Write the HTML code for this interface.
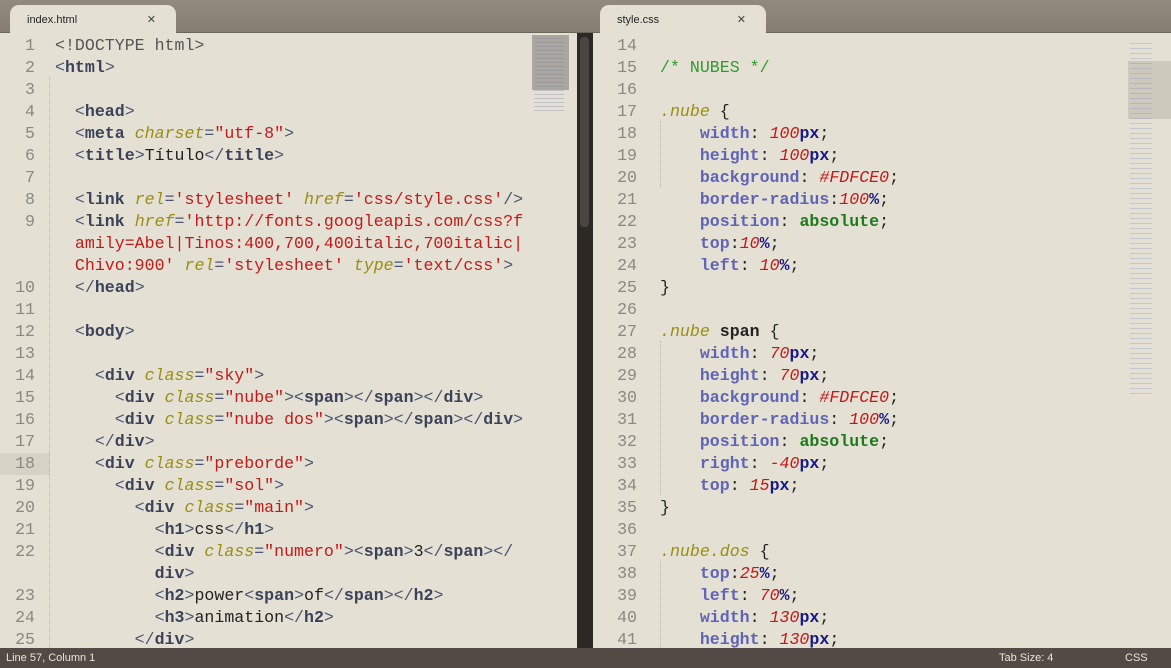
<!DOCTYPE html>
<html><head><meta charset="utf-8">
<style>
*{margin:0;padding:0;box-sizing:border-box}
body{width:1171px;height:668px;overflow:hidden;background:#e4e1d4;position:relative;font-family:"Liberation Mono",monospace}
.tabbar{position:absolute;left:0;top:0;width:1171px;height:33px;background:linear-gradient(#928a7e,#857d71);border-bottom:1px solid #6c655c}
.tab{position:absolute;top:5px;height:28px;background:#e4e1d4;border-radius:9px 9px 0 0;font-family:"Liberation Sans",sans-serif;font-size:11px;color:#222;padding:9px 0 0 17px}
.tab .x{position:absolute;right:20px;top:8px;font-size:11px;color:#444}
.pane{position:absolute;top:33px;height:615px;background:#e4e1d4;overflow:hidden}
.ln,.cd{position:absolute;white-space:pre;font-size:16.6px;line-height:22px;height:22px}
.ln{color:#8a8880;text-align:right;width:40px}
.b{color:#4b5573}.t{color:#3b4259;font-weight:bold}.a{color:#9a8d12;font-style:italic}.s{color:#c21a1a}.d{color:#555}
.p{color:#6064b6;font-weight:bold}.n{color:#c21818;font-style:italic}.u{color:#161a86;font-weight:bold}.g{color:#1d7a1d;font-weight:bold}.c{color:#2e9a2e}.k{color:#222}
.status{position:absolute;left:0;top:648px;width:1171px;height:20px;background:#524b45;color:#e8e4dc;font-family:"Liberation Sans",sans-serif;font-size:11px}
.guide{position:absolute;width:0;border-left:1px dotted #bdb9aa}
</style></head><body>
<div class="tabbar">
 <div class="tab" style="left:10px;width:166px">index.html<span class="x">✕</span></div>
 <div class="tab" style="left:600px;width:166px">style.css<span class="x">✕</span></div>
</div>

<div class="pane" style="left:0;width:577px">
 <div style="position:absolute;left:0;top:420px;width:50px;height:22px;background:#d6d3c6"></div>
 <div style="position:absolute;left:532px;top:2px;width:37px;height:55px;background:#aca79c"></div>
 <div style="position:absolute;left:534px;top:5px;width:30px;height:75px;background:repeating-linear-gradient(#7a7fa8 0 1px,transparent 1px 4px);opacity:.35"></div>
 <div class="guide" style="left:49px;top:44px;height:571px"></div>
</div>
<div style="position:absolute;left:577px;top:33px;width:16px;height:615px;background:#2b2825"></div>
<div style="position:absolute;left:580px;top:37px;width:9px;height:190px;background:#4b4641;border-radius:4px"></div>

<div class="pane" style="left:593px;width:578px">
 <div style="position:absolute;left:535px;top:28px;width:43px;height:58px;background:#cdc9bc"></div>
 <div style="position:absolute;left:537px;top:10px;width:22px;height:355px;background:repeating-linear-gradient(#8f93c8 0 1px,transparent 1px 5px);opacity:.35"></div>
 <div class="guide" style="left:67px;top:88px;height:66px"></div>
 <div class="guide" style="left:67px;top:308px;height:154px"></div>
 <div class="guide" style="left:67px;top:528px;height:87px"></div>
</div>

<!-- left code -->
<div class="ln" style="left:-5px;top:35px">1</div><div class="cd" style="left:55px;top:35px"><span class="d">&lt;!DOCTYPE html&gt;</span></div>
<div class="ln" style="left:-5px;top:57px">2</div><div class="cd" style="left:55px;top:57px"><span class="b">&lt;</span><span class="t">html</span><span class="b">&gt;</span></div>
<div class="ln" style="left:-5px;top:79px">3</div>
<div class="ln" style="left:-5px;top:101px">4</div><div class="cd" style="left:55px;top:101px">  <span class="b">&lt;</span><span class="t">head</span><span class="b">&gt;</span></div>
<div class="ln" style="left:-5px;top:123px">5</div><div class="cd" style="left:55px;top:123px">  <span class="b">&lt;</span><span class="t">meta</span> <span class="a">charset</span><span class="b">=</span><span class="s">"utf-8"</span><span class="b">&gt;</span></div>
<div class="ln" style="left:-5px;top:145px">6</div><div class="cd" style="left:55px;top:145px">  <span class="b">&lt;</span><span class="t">title</span><span class="b">&gt;</span><span class="k">Título</span><span class="b">&lt;/</span><span class="t">title</span><span class="b">&gt;</span></div>
<div class="ln" style="left:-5px;top:167px">7</div>
<div class="ln" style="left:-5px;top:189px">8</div><div class="cd" style="left:55px;top:189px">  <span class="b">&lt;</span><span class="t">link</span> <span class="a">rel</span><span class="b">=</span><span class="s">'stylesheet'</span> <span class="a">href</span><span class="b">=</span><span class="s">'css/style.css'</span><span class="b">/&gt;</span></div>
<div class="ln" style="left:-5px;top:211px">9</div><div class="cd" style="left:55px;top:211px">  <span class="b">&lt;</span><span class="t">link</span> <span class="a">href</span><span class="b">=</span><span class="s">'http://fonts.googleapis.com/css?f</span></div>
<div class="cd" style="left:55px;top:233px">  <span class="s">amily=Abel|Tinos:400,700,400italic,700italic|</span></div>
<div class="cd" style="left:55px;top:255px">  <span class="s">Chivo:900'</span> <span class="a">rel</span><span class="b">=</span><span class="s">'stylesheet'</span> <span class="a">type</span><span class="b">=</span><span class="s">'text/css'</span><span class="b">&gt;</span></div>
<div class="ln" style="left:-5px;top:277px">10</div><div class="cd" style="left:55px;top:277px">  <span class="b">&lt;/</span><span class="t">head</span><span class="b">&gt;</span></div>
<div class="ln" style="left:-5px;top:299px">11</div>
<div class="ln" style="left:-5px;top:321px">12</div><div class="cd" style="left:55px;top:321px">  <span class="b">&lt;</span><span class="t">body</span><span class="b">&gt;</span></div>
<div class="ln" style="left:-5px;top:343px">13</div>
<div class="ln" style="left:-5px;top:365px">14</div><div class="cd" style="left:55px;top:365px">    <span class="b">&lt;</span><span class="t">div</span> <span class="a">class</span><span class="b">=</span><span class="s">"sky"</span><span class="b">&gt;</span></div>
<div class="ln" style="left:-5px;top:387px">15</div><div class="cd" style="left:55px;top:387px">      <span class="b">&lt;</span><span class="t">div</span> <span class="a">class</span><span class="b">=</span><span class="s">"nube"</span><span class="b">&gt;&lt;</span><span class="t">span</span><span class="b">&gt;&lt;/</span><span class="t">span</span><span class="b">&gt;&lt;/</span><span class="t">div</span><span class="b">&gt;</span></div>
<div class="ln" style="left:-5px;top:409px">16</div><div class="cd" style="left:55px;top:409px">      <span class="b">&lt;</span><span class="t">div</span> <span class="a">class</span><span class="b">=</span><span class="s">"nube dos"</span><span class="b">&gt;&lt;</span><span class="t">span</span><span class="b">&gt;&lt;/</span><span class="t">span</span><span class="b">&gt;&lt;/</span><span class="t">div</span><span class="b">&gt;</span></div>
<div class="ln" style="left:-5px;top:431px">17</div><div class="cd" style="left:55px;top:431px">    <span class="b">&lt;/</span><span class="t">div</span><span class="b">&gt;</span></div>
<div class="ln" style="left:-5px;top:453px">18</div><div class="cd" style="left:55px;top:453px">    <span class="b">&lt;</span><span class="t">div</span> <span class="a">class</span><span class="b">=</span><span class="s">"preborde"</span><span class="b">&gt;</span></div>
<div class="ln" style="left:-5px;top:475px">19</div><div class="cd" style="left:55px;top:475px">      <span class="b">&lt;</span><span class="t">div</span> <span class="a">class</span><span class="b">=</span><span class="s">"sol"</span><span class="b">&gt;</span></div>
<div class="ln" style="left:-5px;top:497px">20</div><div class="cd" style="left:55px;top:497px">        <span class="b">&lt;</span><span class="t">div</span> <span class="a">class</span><span class="b">=</span><span class="s">"main"</span><span class="b">&gt;</span></div>
<div class="ln" style="left:-5px;top:519px">21</div><div class="cd" style="left:55px;top:519px">          <span class="b">&lt;</span><span class="t">h1</span><span class="b">&gt;</span><span class="k">css</span><span class="b">&lt;/</span><span class="t">h1</span><span class="b">&gt;</span></div>
<div class="ln" style="left:-5px;top:541px">22</div><div class="cd" style="left:55px;top:541px">          <span class="b">&lt;</span><span class="t">div</span> <span class="a">class</span><span class="b">=</span><span class="s">"numero"</span><span class="b">&gt;&lt;</span><span class="t">span</span><span class="b">&gt;</span><span class="k">3</span><span class="b">&lt;/</span><span class="t">span</span><span class="b">&gt;&lt;/</span></div>
<div class="cd" style="left:55px;top:563px">          <span class="t">div</span><span class="b">&gt;</span></div>
<div class="ln" style="left:-5px;top:585px">23</div><div class="cd" style="left:55px;top:585px">          <span class="b">&lt;</span><span class="t">h2</span><span class="b">&gt;</span><span class="k">power</span><span class="b">&lt;</span><span class="t">span</span><span class="b">&gt;</span><span class="k">of</span><span class="b">&lt;/</span><span class="t">span</span><span class="b">&gt;&lt;/</span><span class="t">h2</span><span class="b">&gt;</span></div>
<div class="ln" style="left:-5px;top:607px">24</div><div class="cd" style="left:55px;top:607px">          <span class="b">&lt;</span><span class="t">h3</span><span class="b">&gt;</span><span class="k">animation</span><span class="b">&lt;/</span><span class="t">h2</span><span class="b">&gt;</span></div>
<div class="ln" style="left:-5px;top:629px">25</div><div class="cd" style="left:55px;top:629px">        <span class="b">&lt;/</span><span class="t">div</span><span class="b">&gt;</span></div>

<!-- right code -->
<div class="ln" style="left:597px;top:35px">14</div>
<div class="ln" style="left:597px;top:57px">15</div><div class="cd" style="left:660px;top:57px"><span class="c">/* NUBES */</span></div>
<div class="ln" style="left:597px;top:79px">16</div>
<div class="ln" style="left:597px;top:101px">17</div><div class="cd" style="left:660px;top:101px"><span class="a">.nube</span> <span class="k">{</span></div>
<div class="ln" style="left:597px;top:123px">18</div><div class="cd" style="left:660px;top:123px">    <span class="p">width</span><span class="k">: </span><span class="n">100</span><span class="u">px</span><span class="k">;</span></div>
<div class="ln" style="left:597px;top:145px">19</div><div class="cd" style="left:660px;top:145px">    <span class="p">height</span><span class="k">: </span><span class="n">100</span><span class="u">px</span><span class="k">;</span></div>
<div class="ln" style="left:597px;top:167px">20</div><div class="cd" style="left:660px;top:167px">    <span class="p">background</span><span class="k">: </span><span class="n">#FDFCE0</span><span class="k">;</span></div>
<div class="ln" style="left:597px;top:189px">21</div><div class="cd" style="left:660px;top:189px">    <span class="p">border-radius</span><span class="k">:</span><span class="n">100</span><span class="u">%</span><span class="k">;</span></div>
<div class="ln" style="left:597px;top:211px">22</div><div class="cd" style="left:660px;top:211px">    <span class="p">position</span><span class="k">: </span><span class="g">absolute</span><span class="k">;</span></div>
<div class="ln" style="left:597px;top:233px">23</div><div class="cd" style="left:660px;top:233px">    <span class="p">top</span><span class="k">:</span><span class="n">10</span><span class="u">%</span><span class="k">;</span></div>
<div class="ln" style="left:597px;top:255px">24</div><div class="cd" style="left:660px;top:255px">    <span class="p">left</span><span class="k">: </span><span class="n">10</span><span class="u">%</span><span class="k">;</span></div>
<div class="ln" style="left:597px;top:277px">25</div><div class="cd" style="left:660px;top:277px"><span class="k">}</span></div>
<div class="ln" style="left:597px;top:299px">26</div>
<div class="ln" style="left:597px;top:321px">27</div><div class="cd" style="left:660px;top:321px"><span class="a">.nube</span> <span class="k" style="font-weight:bold">span</span> <span class="k">{</span></div>
<div class="ln" style="left:597px;top:343px">28</div><div class="cd" style="left:660px;top:343px">    <span class="p">width</span><span class="k">: </span><span class="n">70</span><span class="u">px</span><span class="k">;</span></div>
<div class="ln" style="left:597px;top:365px">29</div><div class="cd" style="left:660px;top:365px">    <span class="p">height</span><span class="k">: </span><span class="n">70</span><span class="u">px</span><span class="k">;</span></div>
<div class="ln" style="left:597px;top:387px">30</div><div class="cd" style="left:660px;top:387px">    <span class="p">background</span><span class="k">: </span><span class="n">#FDFCE0</span><span class="k">;</span></div>
<div class="ln" style="left:597px;top:409px">31</div><div class="cd" style="left:660px;top:409px">    <span class="p">border-radius</span><span class="k">: </span><span class="n">100</span><span class="u">%</span><span class="k">;</span></div>
<div class="ln" style="left:597px;top:431px">32</div><div class="cd" style="left:660px;top:431px">    <span class="p">position</span><span class="k">: </span><span class="g">absolute</span><span class="k">;</span></div>
<div class="ln" style="left:597px;top:453px">33</div><div class="cd" style="left:660px;top:453px">    <span class="p">right</span><span class="k">: </span><span class="n">-40</span><span class="u">px</span><span class="k">;</span></div>
<div class="ln" style="left:597px;top:475px">34</div><div class="cd" style="left:660px;top:475px">    <span class="p">top</span><span class="k">: </span><span class="n">15</span><span class="u">px</span><span class="k">;</span></div>
<div class="ln" style="left:597px;top:497px">35</div><div class="cd" style="left:660px;top:497px"><span class="k">}</span></div>
<div class="ln" style="left:597px;top:519px">36</div>
<div class="ln" style="left:597px;top:541px">37</div><div class="cd" style="left:660px;top:541px"><span class="a">.nube.dos</span> <span class="k">{</span></div>
<div class="ln" style="left:597px;top:563px">38</div><div class="cd" style="left:660px;top:563px">    <span class="p">top</span><span class="k">:</span><span class="n">25</span><span class="u">%</span><span class="k">;</span></div>
<div class="ln" style="left:597px;top:585px">39</div><div class="cd" style="left:660px;top:585px">    <span class="p">left</span><span class="k">: </span><span class="n">70</span><span class="u">%</span><span class="k">;</span></div>
<div class="ln" style="left:597px;top:607px">40</div><div class="cd" style="left:660px;top:607px">    <span class="p">width</span><span class="k">: </span><span class="n">130</span><span class="u">px</span><span class="k">;</span></div>
<div class="ln" style="left:597px;top:629px">41</div><div class="cd" style="left:660px;top:629px">    <span class="p">height</span><span class="k">: </span><span class="n">130</span><span class="u">px</span><span class="k">;</span></div>

<div class="status">
 <span style="position:absolute;left:6px;top:4px">Line 57, Column 1</span>
 <span style="position:absolute;left:999px;top:4px">Tab Size: 4</span>
 <span style="position:absolute;left:1125px;top:4px">CSS</span>
</div>
</body></html>
